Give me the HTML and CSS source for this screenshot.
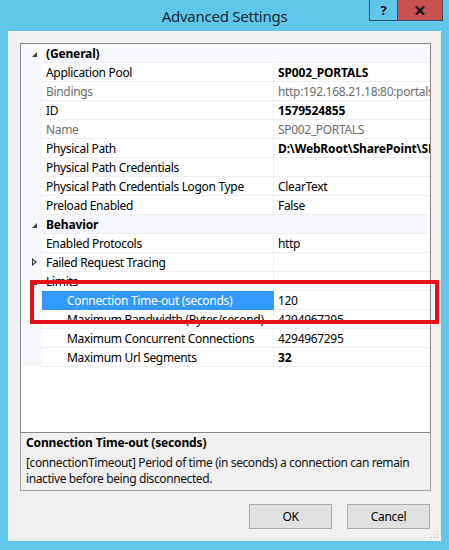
FILE: index.html
```html
<!DOCTYPE html>
<html>
<head>
<meta charset="utf-8">
<link rel="stylesheet" href="styles.css">
</head>
<body>
<div class="window">
  <div class="titlebar">
    <div class="title">Advanced Settings</div>
    <div class="caption-btns">
      <div class="cbtn help">?</div>
      <div class="cbtn close">
        <svg width="10" height="9" viewBox="0 0 10 9"><path d="M1 0.5 L9 8.5 M9 0.5 L1 8.5" stroke="#111" stroke-width="2.2"/></svg>
      </div>
    </div>
  </div>
  <div class="client">
    <div class="grid">
      <div class="row cat">
        <div class="gutter"><span class="exp-open"></span></div>
        <div class="name">(General)</div>
        <div class="value"></div>
      </div>
      <div class="row">
        <div class="gutter"></div>
        <div class="name">Application Pool</div>
        <div class="value bold">SP002_PORTALS</div>
      </div>
      <div class="row dim">
        <div class="gutter"></div>
        <div class="name">Bindings</div>
        <div class="value">http:192.168.21.18:80:portals0</div>
      </div>
      <div class="row">
        <div class="gutter"></div>
        <div class="name">ID</div>
        <div class="value bold">1579524855</div>
      </div>
      <div class="row dim">
        <div class="gutter"></div>
        <div class="name">Name</div>
        <div class="value">SP002_PORTALS</div>
      </div>
      <div class="row">
        <div class="gutter"></div>
        <div class="name">Physical Path</div>
        <div class="value bold">D:\WebRoot\SharePoint\SP002</div>
      </div>
      <div class="row">
        <div class="gutter"></div>
        <div class="name">Physical Path Credentials</div>
        <div class="value"></div>
      </div>
      <div class="row">
        <div class="gutter"></div>
        <div class="name">Physical Path Credentials Logon Type</div>
        <div class="value">ClearText</div>
      </div>
      <div class="row">
        <div class="gutter"></div>
        <div class="name">Preload Enabled</div>
        <div class="value">False</div>
      </div>
      <div class="row cat">
        <div class="gutter"><span class="exp-open"></span></div>
        <div class="name">Behavior</div>
        <div class="value"></div>
      </div>
      <div class="row">
        <div class="gutter"></div>
        <div class="name">Enabled Protocols</div>
        <div class="value">http</div>
      </div>
      <div class="row">
        <div class="gutter"><span class="exp-closed"></span></div>
        <div class="name">Failed Request Tracing</div>
        <div class="value"></div>
      </div>
      <div class="row">
        <div class="gutter"><span class="exp-open"></span></div>
        <div class="name">Limits</div>
        <div class="value"></div>
      </div>
      <div class="row sub selected">
        <div class="gutter"></div>
        <div class="name">Connection Time-out (seconds)</div>
        <div class="value">120</div>
      </div>
      <div class="row sub">
        <div class="gutter"></div>
        <div class="name">Maximum Bandwidth (Bytes/second)</div>
        <div class="value">4294967295</div>
      </div>
      <div class="row sub">
        <div class="gutter"></div>
        <div class="name">Maximum Concurrent Connections</div>
        <div class="value">4294967295</div>
      </div>
      <div class="row sub">
        <div class="gutter"></div>
        <div class="name">Maximum Url Segments</div>
        <div class="value bold">32</div>
      </div>
    </div>
    <div class="desc">
      <div class="desc-title">Connection Time-out (seconds)</div>
      <div class="desc-text">[connectionTimeout] Period of time (in seconds) a connection can remain inactive before being disconnected.</div>
    </div>
    <div class="buttons">
      <div class="btn">OK</div>
      <div class="btn">Cancel</div>
    </div>
    <div class="grip">
      <svg width="8" height="8" viewBox="0 0 8 8"><g fill="#b8b8b8"><rect x="6" y="0" width="1" height="1"/><rect x="3" y="3" width="1" height="1"/><rect x="6" y="3" width="1" height="1"/><rect x="0" y="6" width="1" height="1"/><rect x="3" y="6" width="1" height="1"/><rect x="6" y="6" width="1" height="1"/></g></svg>
    </div>
  </div>
  <div class="highlight"></div>
</div>
</body>
</html>
```

FILE: styles.css
```css
* { box-sizing: border-box; }
html, body { margin: 0; padding: 0; }
body {
  background: #60c7eb;
  font-family: "Noto Sans", "Open Sans", sans-serif;
  font-size: 12px;
  letter-spacing: -0.32px;
  color: #000;
  width: 449px;
  height: 550px;
  overflow: hidden;
}
.window {
  position: relative;
  width: 449px;
  height: 550px;
  padding: 0 8px 9px 8px;
  display: flex;
  flex-direction: column;
}
.titlebar {
  height: 31px;
  position: relative;
  display: flex;
  justify-content: center;
  align-items: center;
  margin: 0 -8px;
}
.title {
  font-size: 15px;
  letter-spacing: -0.25px;
  color: #1a2a36;
  margin-top: 1px;
}
.caption-btns {
  position: absolute;
  top: 0;
  right: 6px;
  display: flex;
}
.cbtn {
  height: 21px;
  border: 1px solid #34506a;
  border-top: none;
  display: flex;
  align-items: center;
  justify-content: center;
}
.help {
  width: 28px;
  background: #60c7eb;
  font-weight: bold;
  font-size: 13px;
  color: #111;
  border-right: none;
}
.close {
  width: 46px;
  background: #c75050;
}
.client {
  flex: 1;
  background: #f0f0f0;
  padding: 12px 10px 0 12px;
  display: flex;
  flex-direction: column;
  position: relative;
}
.grid {
  height: 390px;
  background: #fff;
  border: 1px solid #8a8a8a;
  overflow: hidden;
}
.row {
  display: flex;
  height: 19px;
  line-height: 20px;
  white-space: nowrap;
}
.gutter {
  width: 21px;
  flex: none;
  background: #f6f8fb;
  position: relative;
}
.name {
  width: 232px;
  flex: none;
  padding-left: 4px;
  border-bottom: 1px solid #f0f0f0;
  border-right: 1px solid #f0f0f0;
  overflow: hidden;
}
.value {
  flex: 1;
  padding-left: 4px;
  border-bottom: 1px solid #f0f0f0;
  overflow: hidden;
}
.cat .name, .cat .value { background: #f6f8fb; }
.cat .name { font-weight: bold; letter-spacing: -0.15px; border-right-color: #f6f8fb; }
.bold { font-weight: bold; letter-spacing: -0.15px; }
.dim .name, .dim .value { color: #6d6d6d; }
.sub .name { padding-left: 25px; }
.selected .name { background: #3399ff; color: #fff; border-right-color: #3399ff; border-bottom-color: #3399ff; }
.exp-open {
  position: absolute;
  left: 11px;
  top: 8px;
  width: 0;
  height: 0;
  border-left: 5px solid transparent;
  border-bottom: 5px solid #444;
}
.exp-closed {
  position: absolute;
  left: 11px;
  top: 5px;
  width: 5px;
  height: 9px;
}
.exp-closed::before {
  content: "";
  position: absolute;
  left: 0; top: 0;
  border-top: 4.5px solid transparent;
  border-bottom: 4.5px solid transparent;
  border-left: 5px solid #333;
}
.exp-closed::after {
  content: "";
  position: absolute;
  left: 1px; top: 2px;
  border-top: 2.5px solid transparent;
  border-bottom: 2.5px solid transparent;
  border-left: 2.5px solid #fff;
}
.desc {
  height: 58px;
  border: 1px solid #a0a0a0;
  border-top: none;
  background: #f0f0f0;
  padding: 2px 5px 0 5px;
  line-height: 16px;
}
.desc-title {
  font-weight: bold;
  letter-spacing: -0.15px;
  margin-bottom: 4px;
}
.desc-text {
  color: #111;
  letter-spacing: -0.4px;
}
.buttons {
  display: flex;
  justify-content: flex-end;
  gap: 15px;
  margin-top: 13px;
  padding-right: 1px;
}
.btn {
  width: 83px;
  height: 25px;
  background: #e1e1e1;
  border: 1px solid #adadad;
  display: flex;
  align-items: center;
  justify-content: center;
}
.grip {
  position: absolute;
  right: 2px;
  bottom: 2px;
  line-height: 0;
}
.highlight {
  position: absolute;
  left: 30px;
  top: 280px;
  width: 409px;
  height: 44px;
  border: 4px solid #e3101c;
  pointer-events: none;
}
```
